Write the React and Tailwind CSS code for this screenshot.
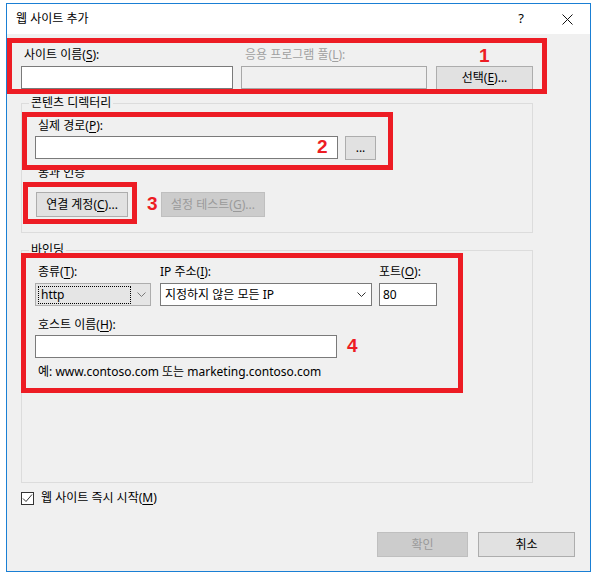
import React from 'react'

// "웹 사이트 추가" dialog (IIS Manager), with the red numbered callouts drawn over it.

const FONT = { fontFamily: '"Noto Sans", "Noto Sans CJK KR", sans-serif' }

const labelClass = 'h-[16px] text-[12px] leading-[16px] whitespace-nowrap'
const inputClass = 'h-[23px] border border-[#7a7a7a] bg-white'
const buttonClass =
  'flex items-center justify-center border border-[#adadad] bg-[#e1e1e1] text-[12px] leading-[16px] text-black whitespace-nowrap'
const disabledButtonClass =
  'flex items-center justify-center border border-[#bfbfbf] bg-[#cccccc] text-[12px] leading-[16px] text-[#9a9a9a] whitespace-nowrap'

function Mn({ children }) {
  return <span className="underline underline-offset-2">{children}</span>
}

function Chevron({ color = '#606060' }) {
  return (
    <svg width="9" height="5" viewBox="0 0 9 5" className="shrink-0">
      <path d="M0.5 0.5 L4.5 4.5 L8.5 0.5" fill="none" stroke={color} strokeWidth="1" />
    </svg>
  )
}

function Callout({ className }) {
  return <div className={`pointer-events-none absolute border-[5px] border-[#ed1c24] ${className}`} />
}

function Num({ children, className }) {
  return (
    <span
      className={`pointer-events-none absolute text-[19px] font-bold leading-[19px] text-[#ed1c24] ${className}`}
      style={{ fontFamily: '"Liberation Sans", Arial, sans-serif' }}
    >
      {children}
    </span>
  )
}

function Group({ title, className, children }) {
  return (
    <fieldset className={`ml-[14px] w-[512px] border border-[#dcdcdc] ${className}`}>
      <legend className="ml-[7px] px-[2px] text-[12px] leading-[16px]">{title}</legend>
      {children}
    </fieldset>
  )
}

export default function App() {
  return (
    <div className="relative h-[577px] w-[596px] overflow-hidden bg-white pl-[6px] pt-[3px] text-black" style={FONT}>
      <div className="flex h-[569px] w-[585px] flex-col border border-[#1a7fd4] bg-[#f0f0f0]">
        {/* title bar */}
        <div className="flex h-[30px] shrink-0 items-center bg-white pl-[9px]">
          <span className="text-[12px] leading-[16px]">웹 사이트 추가</span>
          <div className="ml-auto flex h-full">
            <div className="flex w-[46px] items-center justify-center text-[13px]">?</div>
            <div className="flex w-[46px] items-center justify-center">
              <svg width="11" height="11" viewBox="0 0 11 11">
                <path d="M0.5 0.5 L10.5 10.5 M10.5 0.5 L0.5 10.5" stroke="#111" strokeWidth="1" />
              </svg>
            </div>
          </div>
        </div>

        {/* body */}
        <div className="flex flex-1 flex-col pt-[13px]">
          <div className="flex items-start pl-[14px]">
            <div className="w-[212px]">
              <div className={`${labelClass} ml-[3px] mb-[3px]`}>
                사이트 이름(<Mn>S</Mn>):
              </div>
              <div className={inputClass} />
            </div>
            <div className="ml-[8px] w-[186px]">
              <div className={`${labelClass} ml-[4px] mb-[3px] text-[#a0a0a0]`}>
                응용 프로그램 풀(<Mn>L</Mn>):
              </div>
              <div className="h-[23px] border border-[#a8a8a8] bg-[#f0f0f0]" />
            </div>
            <div className="ml-[9px] w-[97px] pt-[19px]">
              <button type="button" className={`${buttonClass} h-[24px] w-full`}>
                선택(<Mn>E</Mn>)...
              </button>
            </div>
          </div>

          <Group title="콘텐츠 디렉터리" className="mt-[5px] h-[138px]">
            <div className="pl-[13px] pt-[7px]">
              <div className={`${labelClass} ml-[3px]`}>
                실제 경로(<Mn>P</Mn>):
              </div>
              <div className="mt-[2px] flex items-start">
                <div className={`${inputClass} w-[303px]`} />
                <button type="button" className={`${buttonClass} ml-[7px] h-[24px] w-[31px]`}>
                  ...
                </button>
              </div>
              <div className={`${labelClass} ml-[3px] mt-[5px]`}>통과 인증</div>
              <div className="mt-[11px] flex">
                <button type="button" className={`${buttonClass} ml-[1px] h-[25px] w-[92px]`}>
                  연결 계정(<Mn>C</Mn>)...
                </button>
                <button type="button" className={`${disabledButtonClass} ml-[33px] h-[25px] w-[104px]`}>
                  설정 테스트(<Mn>G</Mn>)...
                </button>
              </div>
            </div>
          </Group>

          <Group title="바인딩" className="mt-[9px] h-[241px]">
            <div className="pl-[13px] pt-[6px]">
              <div className="flex items-start">
                <div className="w-[116px]">
                  <div className={`${labelClass} ml-[3px] mb-[3px]`}>
                    종류(<Mn>T</Mn>):
                  </div>
                  <div className="flex h-[23px] items-center border border-[#adadad] bg-[#e5e5e5] pr-[4px]">
                    <div className="ml-[2px] flex h-[18px] w-[93px] items-center border border-dotted border-black pl-[2px] text-[12px]">
                      http
                    </div>
                    <div className="ml-auto">
                      <Chevron color="#7a7a7a" />
                    </div>
                  </div>
                </div>
                <div className="ml-[9px] w-[212px]">
                  <div className={`${labelClass} mb-[3px]`}>
                    IP 주소(<Mn>I</Mn>):
                  </div>
                  <div className={`${inputClass} flex items-center pl-[4px] pr-[5px] text-[12px]`}>
                    <span>지정하지 않은 모든 IP</span>
                    <div className="ml-auto">
                      <Chevron color="#333" />
                    </div>
                  </div>
                </div>
                <div className="ml-[7px] w-[58px]">
                  <div className={`${labelClass} mb-[3px]`}>
                    포트(<Mn>O</Mn>):
                  </div>
                  <div className={`${inputClass} flex items-center pl-[3px] text-[12px]`}>80</div>
                </div>
              </div>
              <div className={`${labelClass} ml-[3px] mt-[11px]`}>
                호스트 이름(<Mn>H</Mn>):
              </div>
              <div className={`${inputClass} mt-[2px] w-[302px]`} />
              <div className={`${labelClass} ml-[3px] mt-[6px]`}>
                예: www.contoso.com 또는 marketing.contoso.com
              </div>
            </div>
          </Group>

          <div className="mt-[7px] flex items-center pl-[14px]">
            <div className="flex h-[13px] w-[13px] items-center justify-center border border-[#333] bg-white">
              <svg width="11" height="11" viewBox="0 0 11 11">
                <path d="M1 5.5 L4 8.5 L10 1.5" fill="none" stroke="#333" strokeWidth="1" />
              </svg>
            </div>
            <span className={`${labelClass} ml-[7px]`}>
              웹 사이트 즉시 시작(<Mn>M</Mn>)
            </span>
          </div>

          <div className="mt-[26px] flex justify-end gap-[10px] pr-[15px]">
            <button type="button" className={`${disabledButtonClass} h-[25px] w-[91px]`}>
              확인
            </button>
            <button type="button" className={`${buttonClass} h-[25px] w-[97px]`}>
              취소
            </button>
          </div>
        </div>
      </div>

      {/* numbered callouts */}
      <Callout className="left-[7px] top-[38px] h-[56px] w-[540px]" />
      <Callout className="left-[22px] top-[112px] h-[58px] w-[371px]" />
      <Callout className="left-[23px] top-[182px] h-[42px] w-[114px]" />
      <Callout className="left-[21px] top-[253px] h-[140px] w-[442px]" />
      <Num className="left-[479px] top-[46px]">1</Num>
      <Num className="left-[317px] top-[137px]">2</Num>
      <Num className="left-[147px] top-[194px]">3</Num>
      <Num className="left-[347px] top-[336px]">4</Num>
    </div>
  )
}
